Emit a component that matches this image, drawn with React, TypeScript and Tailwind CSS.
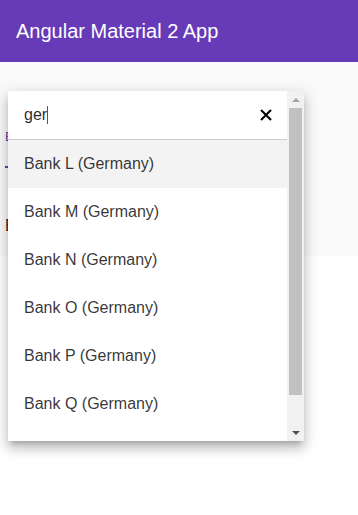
import React from "react"

const banks = ["L", "M", "N", "O", "P", "Q"]

export default function App() {
  return (
    <div className="relative h-[515px] w-full bg-white font-['Liberation_Sans',Arial,sans-serif]">
      {/* TOOLBAR */}
      <div className="flex h-[62px] items-center bg-[#673ab7] px-4 text-[20px] text-white">
        Angular Material 2 App
      </div>

      {/* PAGE CONTENT (mostly covered by the overlay) */}
      <div className="h-[194px] bg-[#fafafa] pl-[5px]">
        <div className="pt-[67px] text-[13px] leading-[16px] text-[#673ab7]">Bank</div>
        <div className="mt-[21px] h-[2px] w-[60px] bg-[#673ab7]" />
        <div className="mt-[48px] text-[16px] leading-[20px] text-black/85">Bank</div>
      </div>

      {/* SELECT OVERLAY */}
      <div className="absolute left-[8px] top-[91px] flex h-[350px] w-[296px] overflow-hidden bg-white shadow-[0_5px_5px_-3px_rgba(0,0,0,0.2),0_8px_10px_1px_rgba(0,0,0,0.14),0_3px_14px_2px_rgba(0,0,0,0.12)]">
        <div className="flex min-w-0 flex-1 flex-col">
          {/* SEARCH */}
          <div className="flex h-[49px] shrink-0 items-center justify-between border-b border-[#cccccc] pl-4 pr-[15px]">
            <div className="flex items-center text-[16px] text-black/85">
              ger
              <span className="h-[18px] w-[1px] bg-[#673ab7]" />
            </div>
            <svg width="12" height="12" viewBox="0 0 12 12" className="text-black">
              <path d="M1 1 L11 11 M11 1 L1 11" stroke="currentColor" strokeWidth="2.1" />
            </svg>
          </div>

          {/* OPTIONS */}
          {banks.map((b, i) => (
            <div
              key={b}
              className={`flex h-[48px] shrink-0 items-center pl-4 text-[16px] text-black/80 ${
                i === 0 ? "bg-[#f3f3f3]" : ""
              }`}
            >
              Bank {b} (Germany)
            </div>
          ))}
        </div>

        {/* SCROLLBAR */}
        <div className="flex w-[17px] shrink-0 flex-col bg-[#f1f1f1]">
          <div className="flex h-[17px] shrink-0 items-center justify-center">
            <svg width="8" height="4" viewBox="0 0 8 4">
              <path d="M0 4 L4 0 L8 4 Z" fill="#a3a3a3" />
            </svg>
          </div>
          <div className="mx-[2px] h-[287px] shrink-0 bg-[#c1c1c1]" />
          <div className="flex-1" />
          <div className="flex h-[17px] shrink-0 items-center justify-center">
            <svg width="8" height="4" viewBox="0 0 8 4">
              <path d="M0 0 L8 0 L4 4 Z" fill="#505050" />
            </svg>
          </div>
        </div>
      </div>
    </div>
  )
}
